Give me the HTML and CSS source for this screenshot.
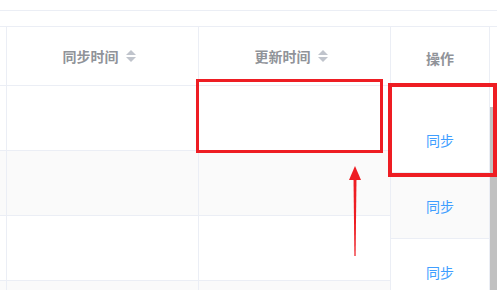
FILE: index.html
```html
<!DOCTYPE html>
<html lang="zh-CN">
<head>
    <meta charset="utf-8" />
    <title>同步列表</title>
    <link rel="stylesheet" href="styles.css">
</head>
<body>
    <div class="page">
        <div class="topbar"></div>
        <div class="table">
            <div class="main">
                <div class="row head">
                    <div class="cell"></div>
                    <div class="cell">
                        <span class="label">同步时间</span>
                        <span class="caret"><i class="up"></i><i class="down"></i></span>
                    </div>
                    <div class="cell">
                        <span class="label">更新时间</span>
                        <span class="caret"><i class="up"></i><i class="down"></i></span>
                    </div>
                </div>
                <div class="row"><div class="cell"></div><div class="cell"></div><div class="cell"></div></div>
                <div class="row striped"><div class="cell"></div><div class="cell"></div><div class="cell"></div></div>
                <div class="row"><div class="cell"></div><div class="cell"></div><div class="cell"></div></div>
                <div class="row striped"><div class="cell"></div><div class="cell"></div><div class="cell"></div></div>
            </div>
            <div class="fixed">
                <div class="fixed-head">操作</div>
                <div class="fixed-body">
                    <div class="fixed-row"><a class="link">同步</a></div>
                    <div class="fixed-row striped"><a class="link">同步</a></div>
                    <div class="fixed-row"><a class="link">同步</a></div>
                </div>
            </div>
            <div class="scroll"><div class="thumb"></div></div>
        </div>

        <!-- annotations -->
        <div class="mark mark-time"></div>
        <div class="mark mark-op"></div>
        <svg class="arrow" width="20" height="96" viewBox="0 0 20 96">
            <polygon points="9,0 3,14 15,14" fill="#ee1d23" />
            <polygon points="7.5,12 10.5,12 9.6,90 8.4,90" fill="#ee1d23" />
        </svg>
    </div>
</body>
</html>
```

FILE: styles.css
```css
body {
    margin: 0;
    background: #fff;
    font-family: "Microsoft YaHei", "Noto Sans CJK SC", "Noto Sans", sans-serif;
    font-size: 14px;
}

.page {
    position: relative;
    width: 497px;
    height: 290px;
    overflow: hidden;
}

.topbar {
    height: 11px;
    box-sizing: border-box;
    border-bottom: 1px solid #ebeef5;
    margin-bottom: 15px;
}

.table {
    display: flex;
    height: 264px;
    border-top: 1px solid #ebeef5;
    overflow: hidden;
}

.main {
    width: 390px;
    flex: none;
}

.row {
    display: grid;
    grid-template-columns: 7px 192px 191px;
    height: 65px;
    box-sizing: border-box;
    border-bottom: 1px solid #ebeef5;
}

.row.head {
    height: 59px;
}

.row.striped {
    background: #fafafa;
}

.cell {
    display: flex;
    align-items: center;
    justify-content: center;
    box-sizing: border-box;
    border-right: 1px solid #ebeef5;
}

.cell:last-child {
    border-right: none;
}

.label {
    color: #909399;
    font-weight: bold;
    line-height: 20px;
}

/* sort carets */
.caret {
    position: relative;
    display: inline-block;
    width: 24px;
    height: 12px;
}

.caret i {
    position: absolute;
    left: 7px;
    width: 0;
    height: 0;
    border: 5px solid transparent;
}

.caret .up {
    top: -5px;
    border-bottom-color: #c0c4cc;
}

.caret .down {
    top: 7px;
    border-top-color: #c0c4cc;
}

.fixed {
    width: 100px;
    flex: none;
    box-sizing: border-box;
    border-left: 1px solid #ebeef5;
    border-right: 1px solid #ebeef5;
}

.fixed-head {
    height: 62px;
    display: flex;
    align-items: center;
    justify-content: center;
    color: #909399;
    font-weight: bold;
}

.fixed-body {
    padding-top: 18px;
}

.fixed-row {
    height: 66px;
    display: flex;
    align-items: center;
    justify-content: center;
    box-sizing: border-box;
    border-bottom: 1px solid #ebeef5;
}

.fixed-row.striped {
    background: #fafafa;
}

.link {
    color: #409eff;
    cursor: pointer;
}

.scroll {
    flex: 1;
    padding-top: 80px;
}

.thumb {
    height: 200px;
    background: #c1c1c1;
}

.mark {
    position: absolute;
    box-sizing: border-box;
    border: 3px solid #ee1d23;
}

.mark-time {
    left: 196px;
    top: 79px;
    width: 187px;
    height: 74px;
}

.mark-op {
    left: 388px;
    top: 83px;
    width: 109px;
    height: 94px;
    border-width: 4px;
}

.arrow {
    position: absolute;
    left: 346px;
    top: 166px;
}
```
